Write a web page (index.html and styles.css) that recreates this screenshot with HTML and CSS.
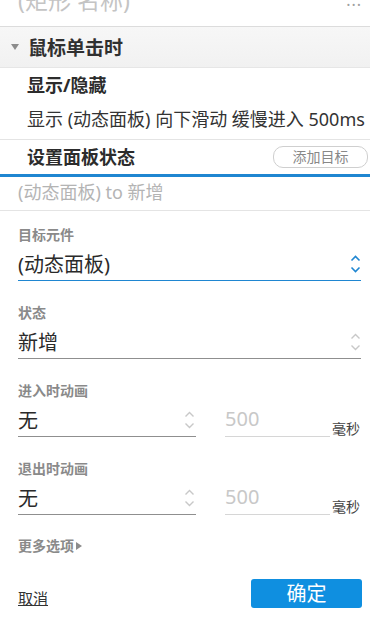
FILE: index.html
```html
<!DOCTYPE html>
<html lang="zh-CN">
<head>
    <meta charset="UTF-8">
    <meta name="viewport" content="width=device-width, initial-scale=1.0">
    <title>交互编辑</title>
    <link rel="stylesheet" href="styles.css">
</head>
<body>
    <div class="panel">
        <div class="title-row">
            <span class="title-text">(矩形 名称)</span>
            <span class="title-more">...</span>
        </div>

        <div class="event-head">
            <svg class="caret" width="8" height="6" viewBox="0 0 8 6"><path d="M0 0H8L4 6Z" fill="#8c8c8c"/></svg>
            <span class="event-name">鼠标单击时</span>
        </div>

        <div class="action">
            <div class="action-name">显示/隐藏</div>
            <div class="action-desc">显示 (动态面板) 向下滑动 缓慢进入 500ms</div>
        </div>

        <div class="action active">
            <div class="action-head">
                <span class="action-name">设置面板状态</span>
                <button class="add-btn">添加目标</button>
            </div>
        </div>

        <div class="summary">(动态面板) to 新增</div>

        <div class="form">
            <div class="field first">
                <div class="field-label">目标元件</div>
                <div class="select focused">
                    <span class="select-value">(动态面板)</span>
                    <svg class="spin" width="11" height="20" viewBox="0 0 11 20"><path d="M1.5 6.5L5.5 2.5L9.5 6.5M1.5 13.5L5.5 17.5L9.5 13.5" fill="none" stroke="#1f86d1" stroke-width="1.6"/></svg>
                </div>
            </div>

            <div class="field">
                <div class="field-label">状态</div>
                <div class="select">
                    <span class="select-value">新增</span>
                    <svg class="spin" width="11" height="20" viewBox="0 0 11 20"><path d="M1.5 6.5L5.5 2.5L9.5 6.5M1.5 13.5L5.5 17.5L9.5 13.5" fill="none" stroke="#c8c8c8" stroke-width="1.4"/></svg>
                </div>
            </div>

            <div class="field">
                <div class="field-label">进入时动画</div>
                <div class="anim-row">
                    <div class="select short">
                        <span class="select-value">无</span>
                        <svg class="spin" width="11" height="20" viewBox="0 0 11 20"><path d="M1.5 6.5L5.5 2.5L9.5 6.5M1.5 13.5L5.5 17.5L9.5 13.5" fill="none" stroke="#c8c8c8" stroke-width="1.4"/></svg>
                    </div>
                    <div class="duration">500</div>
                    <span class="unit">毫秒</span>
                </div>
            </div>

            <div class="field">
                <div class="field-label">退出时动画</div>
                <div class="anim-row">
                    <div class="select short">
                        <span class="select-value">无</span>
                        <svg class="spin" width="11" height="20" viewBox="0 0 11 20"><path d="M1.5 6.5L5.5 2.5L9.5 6.5M1.5 13.5L5.5 17.5L9.5 13.5" fill="none" stroke="#c8c8c8" stroke-width="1.4"/></svg>
                    </div>
                    <div class="duration">500</div>
                    <span class="unit">毫秒</span>
                </div>
            </div>

            <div class="more">更多选项<svg width="6" height="8" viewBox="0 0 6 8"><path d="M0 0L6 4L0 8Z" fill="#8c8c8c"/></svg></div>

            <div class="footer">
                <a class="cancel" href="#">取消</a>
                <button class="ok-btn">确定</button>
            </div>
        </div>
    </div>
</body>
</html>
```

FILE: styles.css
```css
:root {
    --blue: #1f86d1;
    --btn-blue: #0f8fe0;
    --text: #333333;
    --label: #8a8a8a;
    --muted: #b4b4b4;
    --line: #e4e4e4;
}

* {
    margin: 0;
    padding: 0;
    box-sizing: border-box;
}

body {
    background: #ffffff;
    color: var(--text);
    font-family: "Noto Sans", "Noto Sans CJK SC", sans-serif;
    width: 370px;
    height: 618px;
    overflow: hidden;
}

.title-row {
    height: 27px;
    overflow: hidden;
    display: flex;
    justify-content: space-between;
    padding: 0 8px 0 18px;
    border-bottom: 1px solid #dcdcdc;
}

.title-text {
    font-size: 23px;
    line-height: 30px;
    margin-top: -15px;
    color: #c4c4c4;
}

.title-more {
    font-size: 16px;
    line-height: 20px;
    margin-top: -10px;
    color: #a0a0a0;
    letter-spacing: 1px;
}

.event-head {
    height: 41px;
    background: linear-gradient(#f7f7f7, #f1f1f1);
    border-bottom: 1px solid #e6e6e6;
    display: flex;
    align-items: center;
    padding-left: 11px;
}

.caret {
    margin-right: 9px;
}

.event-name {
    font-size: 19px;
    font-weight: 700;
    color: #303030;
}

.action {
    padding-left: 27px;
    border-bottom: 1px solid var(--line);
}

.action-name {
    font-size: 18px;
    font-weight: 700;
    line-height: 34px;
    color: #2c2c2c;
}

.action-desc {
    font-size: 18px;
    line-height: 34px;
    height: 37px;
    white-space: nowrap;
}

.action.active {
    border-bottom: 3px solid var(--blue);
}

.action-head {
    height: 34px;
    display: flex;
    align-items: center;
    justify-content: space-between;
    padding-right: 2px;
}

.add-btn {
    font-family: inherit;
    font-size: 14px;
    color: #888888;
    background: #ffffff;
    border: 1px solid #cfcfcf;
    border-radius: 10px;
    width: 95px;
    height: 22px;
    line-height: 20px;
}

.summary {
    height: 34px;
    line-height: 31px;
    padding-left: 18px;
    font-size: 18px;
    color: var(--muted);
    border-bottom: 1px solid var(--line);
}

.form {
    padding: 0 9px 0 18px;
}

.field {
    margin-top: 24px;
}

.field.first {
    margin-top: 16px;
}

.field-label {
    font-size: 14px;
    font-weight: 700;
    line-height: 16px;
    color: var(--label);
}

.select {
    height: 38px;
    display: flex;
    align-items: center;
    justify-content: space-between;
    padding-top: 7px;
    border-bottom: 1.5px solid #8f8f8f;
}

.select.focused {
    border-bottom-color: var(--blue);
}

.select-value {
    font-size: 20px;
    line-height: 26px;
    color: #2a2a2a;
}

.spin {
    margin-top: -2px;
}

.anim-row {
    display: flex;
    align-items: flex-end;
}

.select.short {
    width: 178px;
    padding-right: 1px;
}

.duration {
    width: 105px;
    height: 38px;
    margin-left: 29px;
    padding-top: 7px;
    font-size: 20px;
    line-height: 26px;
    color: #c8c8c8;
    border-bottom: 1px solid #d6d6d6;
}

.unit {
    font-size: 14px;
    line-height: 18px;
    margin-left: 2px;
    margin-bottom: -1px;
    color: #444444;
}

.more {
    margin-top: 23px;
    font-size: 14px;
    font-weight: 700;
    line-height: 16px;
    color: var(--label);
    display: flex;
    align-items: center;
    gap: 2px;
}

.footer {
    margin-top: 25px;
    display: flex;
    align-items: center;
    justify-content: space-between;
}

.cancel {
    font-size: 15px;
    color: #333333;
    text-decoration: underline;
    margin-top: 7px;
}

.ok-btn {
    font-family: inherit;
    width: 111px;
    height: 29px;
    margin-right: -1px;
    border: none;
    border-radius: 3px;
    background: var(--btn-blue);
    color: #ffffff;
    font-size: 20px;
    line-height: 29px;
}
```
